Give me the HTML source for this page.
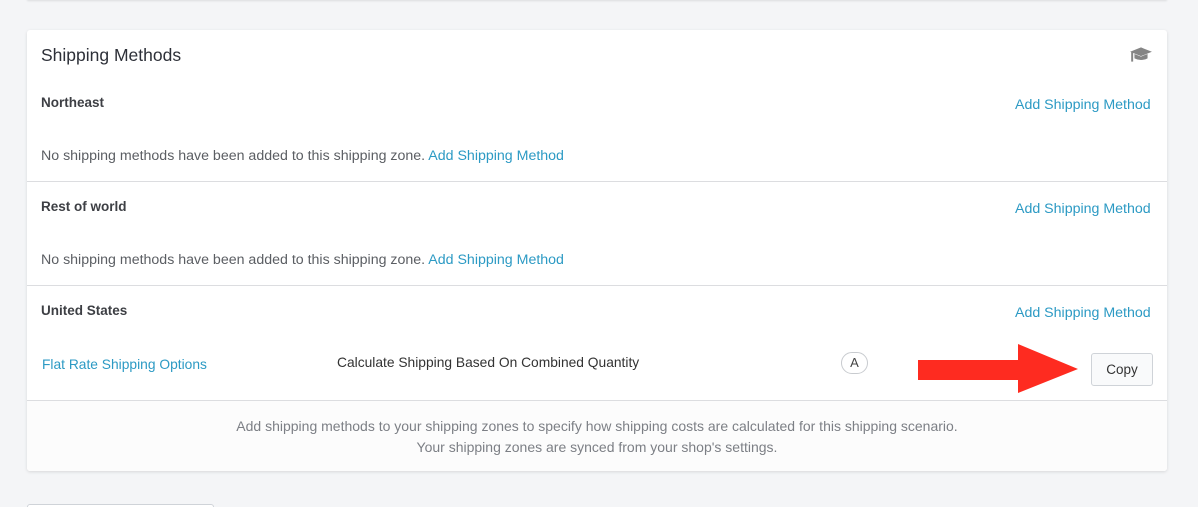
<!DOCTYPE html>
<html><head><style>
html,body{margin:0;width:1198px;height:507px;overflow:hidden}
body{background:#f4f5f7;font-family:"Liberation Sans",sans-serif;position:relative}
.top{position:absolute;left:27px;top:-10px;width:1140px;height:10px;background:#fff;box-shadow:0 1px 2px rgba(0,0,0,.1)}
.card{position:absolute;left:27px;top:30px;width:1140px;height:441px;background:#fff;border-radius:3px;box-shadow:0 1px 3px rgba(0,0,0,.12);overflow:hidden}
.t{position:absolute;white-space:nowrap}
.h{font-size:17.5px;color:#2d3038}
.z{font-size:13.5px;color:#3d3f44;font-weight:bold}
.n{font-size:14.2px;color:#5b5e63}
.a{color:#2c9ac4;font-size:14.2px}
.line{position:absolute;left:0;width:1140px;height:1px;background:#dcdde0}
.foot{position:absolute;left:0;top:371px;width:1140px;height:70px;background:#fcfcfc}
.f{font-size:14px;color:#7c7f85;text-align:center;width:1140px;left:0}
.btn{position:absolute;left:1064px;top:323px;width:60px;height:31px;border:1px solid #cfd3d8;border-radius:3px;background:#f9fafb;font-size:13.5px;color:#333;text-align:center;line-height:31px}
.badge{position:absolute;left:814px;top:322px;width:25px;height:20px;border:1px solid #c8cbcf;border-radius:11px;font-size:13px;color:#444;text-align:center;line-height:20px}
</style></head><body>
<div class="top"></div>
<div class="card">
<div class="t h" style="left:14px;top:15px">Shipping Methods</div>
<svg style="position:absolute;left:1102px;top:15px" width="24" height="19" viewBox="0 0 22 17"><path d="M11 2 L21 6 L11 10 L1 6Z" fill="#858585"/><path d="M5 8 v4 q6 3 12 0 v-4 l-6 2.4z" fill="#858585"/><rect x="2" y="6" width="1.8" height="9" fill="#858585"/></svg>
<div class="t z" style="left:14px;top:65px">Northeast</div>
<div class="t a" style="left:988px;top:67px">Add Shipping Method</div>
<div class="t n" style="left:14px;top:118px">No shipping methods have been added to this shipping zone. <span class="a">Add Shipping Method</span></div>
<div class="line" style="top:151px"></div>
<div class="t z" style="left:14px;top:169px">Rest of world</div>
<div class="t a" style="left:988px;top:171px">Add Shipping Method</div>
<div class="t n" style="left:14px;top:222px">No shipping methods have been added to this shipping zone. <span class="a">Add Shipping Method</span></div>
<div class="line" style="top:255px"></div>
<div class="t z" style="left:14px;top:273px">United States</div>
<div class="t a" style="left:988px;top:275px">Add Shipping Method</div>
<div class="t a" style="left:15px;top:327px;font-size:13.8px">Flat Rate Shipping Options</div>
<div class="t n" style="left:310px;top:325px;color:#333;font-size:13.8px">Calculate Shipping Based On Combined Quantity</div>
<div class="badge">A</div>
<div class="btn">Copy</div>
<div class="line" style="top:370px"></div>
<div class="foot"></div>
<div class="t f" style="top:388px">Add shipping methods to your shipping zones to specify how shipping costs are calculated for this shipping scenario.</div>
<div class="t f" style="top:409px">Your shipping zones are synced from your shop's settings.</div>
</div>
<svg style="position:absolute;left:0;top:0" width="1198" height="507"><polygon points="918,360 1018,360 1018,344 1078,369 1018,393 1018,380 918,380" fill="#fe2b20"/></svg>
<div style="position:absolute;left:27px;top:504px;width:185px;height:10px;border:1px solid #cfd3d8;border-radius:3px;background:#fff"></div>
</body></html>
